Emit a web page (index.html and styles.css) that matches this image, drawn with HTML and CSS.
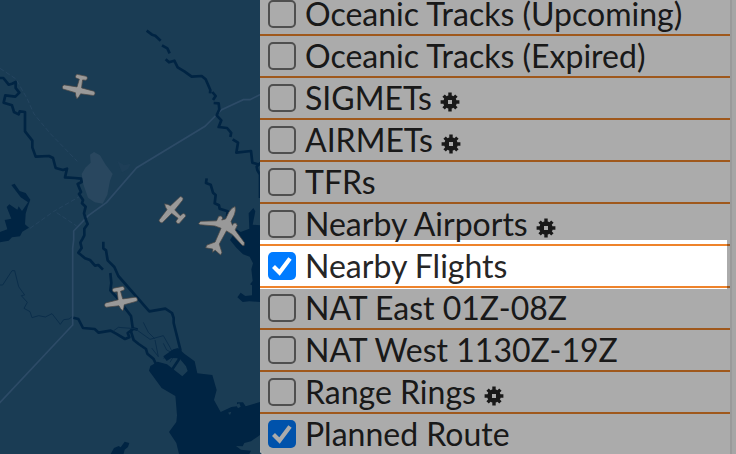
FILE: index.html
```
<!DOCTYPE html>
<html lang="en">

<head>
  <meta charset="UTF-8">
  <meta name="viewport" content="width=device-width, initial-scale=1.0">
  <title>Map Layers</title>
  <link rel="stylesheet" href="styles.css">
</head>

<body>
  <!-- shared icons -->
  <svg class="defs" aria-hidden="true">
    <symbol id="gear" viewBox="0 0 20 20">
      <g stroke="#262626" stroke-width="3.4">
        <path d="M10 .6v18.8M.6 10h18.8" />
        <path d="M3.6 3.6l12.8 12.8M16.4 3.6L3.6 16.4" />
      </g>
      <circle cx="10" cy="10" r="6.8" fill="#262626" />
      <rect x="8" y="8" width="4" height="4" fill="#fff" />
    </symbol>
  </svg>

  <main class="layout">
    <div class="map">
      <svg viewBox="0 0 780 1362" preserveAspectRatio="xMinYMin slice" role="img" aria-label="Flight map">
        <defs>
          <path id="prop" d="M-14 -46Q-18 -45 -18 -39Q-18 -34 -13 -34L-5 -33L-7 -9L-45 -7Q-50 -6 -50 0Q-50 6 -45 6L-8 9L-5 18L0 26L5 18L8 9L45 6Q50 6 50 0Q50 -6 45 -7L7 -9L5 -33L13 -34Q18 -34 18 -39Q18 -45 14 -46Z" />
          <path id="jet" d="M0 -64Q8 -56 9 -40L9 -18L18 -10L18 -16Q24 -24 31 -16L31 -1L73 21L76 30L70 31L29 15L9 13L7 58L25 77L25 86L4 80L0 89L-4 80L-25 86L-25 77L-7 58L-9 13L-29 15L-70 31L-76 30L-73 21L-31 -1L-31 -16Q-24 -24 -18 -16L-18 -10L-9 -18L-9 -40Q-8 -56 0 -64Z" />
        </defs>

        <!-- urban area and borders -->
        <path class="urban" d="M270 464l12-8 18 10 16 27 22 29-8 20-8 42-14 27-24-4-20-14-14-40-5-31 11-19 16-15z" />
        <path class="urban" d="M352 482l20 14 20-5-8 16-18 10z" opacity=".3" />
        <g class="border">
          <path d="M782 283l-32 16h-20l-65 30-50 50-205 124-90 104-55 40-44 46v27l-3 25v230L-4 1212" />
          <path class="dashed" d="M0 205l48 32 34 60 20 45 50 60 80 82M90 685l70-50 90-52M170 638l60 40" />
        </g>

        <!-- rivers -->
        <g class="river">
          <path d="M440 92l16 12 10 3 16 15M486 136l16 9 7 15M497 178l10 9 16-5 10 20 20 12 22 16 30-2 12 10 14 32-1 10M637 276l10 12-8 12M641 309l15 1 2 18-8 18 14 15-8 20 25 3 12 14M694 396l-3 15M698 418l16 10-5 30 44-5 4 35 22 6M782 488l-12 12 2 10 8 14v70" />
          <path d="M620 535l-2 14 14 5 7 24 8 7-3 25 13 6 2 10 24 8-2 16 16 8" />
          <path d="M0 234h10l16 20 10-3 11-5v18l11 14-12 12-30-4-5 22 25 8 6 20 14 7 3-9 16 2v58l22 28v20l10 28 40-2 12 6 8 30 22 6 12-4-6 26 30 2 18 2 2 10-12 6 10 24-6 6 12 18-3 10 11 10-5 20 6 20 5 12-10 14v20l-5 10-7 12 4 16-10 14 20 17 15 5 15 17 10-2 14 14" />
          <path d="M310 725v20l8 6 5 30 20 20 12 27 93 106 48-8 20 13 5 15v15l20 80-5 30-20 30-15 20-16-8-15-25-10-20-18-15-4-14-22-15-15-12-8-25 5-12-5-35-42-55-20-22 3-22-3-30" />
          <path d="M220 953l15 4 14 27 35 3 12 11 36-6 20 11 23 14 13-5-5-13 18-13 12 3" />
        </g>
        <g class="creek">
          <path d="M0 855h8l28-43h8l12 48 18 25-10 2 18 20-10 18 18 10 6 18 20-6 20 4 20-10 25 32 10-14 16-2 8-6M340 993l15-11 50 4 45 32 40-11 20 35 12 25-12 20M430 967l15 30 20 20M465 1020l10 50-20-26M490 1030l10 20 20 10-30 15" />
        </g>

        <!-- lakes and bays -->
        <g class="water">
          <path d="M34 555l10-4 15 22 18 6 14 20-8 22-6 20-2 32 12 10-20 12-7 14-24 3-10 10-26 5V696l22-8-8-28 20-4-14-35 8-8 24 16 4-10 10 14 18-26-22-15z" />
          <path d="M690 720l20-32 12 8 26-10-2-46 14-16 6 10-8 40 24 2v230l-34-2-20 2-16-14 10-14 14 10 20-2v-30l-6-3 8-10-4-35 5-18-10-20-20-7-20-20z" />
          <path d="M520 1048l14-4 20 18 30 22 8 36 45 5 13 45-8 30 20 36 32-15 17-2v-12h18l8 12 65-20v163H537l-8-33-22-33 22-30 2-20-4-48-1-10-41-24-38-52 4-14 22-13 28 8 46 36 16-16-5-14-20-24-24-1-14 9-10-14z" />
          <path d="M332 1362l10-18 14-6 6 4 12-17 14 4-4 12-10 8-4 16z" />
        </g>
        <path class="island" d="M684 1238l10-3-4 10zM708 1214l10-4 4 10-8 5zM708 1338l20 1 5-10 20-5 27-19v57h-32l5-10-30-3z" />

        <!-- aircraft -->
        <g class="plane">
          <use href="#prop" transform="translate(236 271) rotate(12)" />
          <use href="#prop" transform="translate(513 629) rotate(132)" />
          <use href="#prop" transform="translate(363 907) rotate(-11)" />
          <use href="#jet" transform="translate(677 677) rotate(26)" />
        </g>
      </svg>
    </div>

    <form class="panel">
      <ul class="layers">
        <li class="layer"><label><input type="checkbox"><span>Oceanic Tracks (Upcoming)</span></label></li>
        <li class="layer"><label><input type="checkbox"><span>Oceanic Tracks (Expired)</span></label></li>
        <li class="layer">
          <label><input type="checkbox"><span>SIGMETs</span></label>
          <button type="button" class="settings" aria-label="SIGMETs settings"><svg><use href="#gear" /></svg></button>
        </li>
        <li class="layer">
          <label><input type="checkbox"><span>AIRMETs</span></label>
          <button type="button" class="settings" aria-label="AIRMETs settings"><svg><use href="#gear" /></svg></button>
        </li>
        <li class="layer"><label><input type="checkbox"><span>TFRs</span></label></li>
        <li class="layer">
          <label><input type="checkbox"><span>Nearby Airports</span></label>
          <button type="button" class="settings" aria-label="Nearby Airports settings"><svg><use href="#gear" /></svg></button>
        </li>
        <li class="layer spotlight"><label><input type="checkbox" checked><span>Nearby Flights</span></label></li>
        <li class="layer"><label><input type="checkbox"><span>NAT East 01Z-08Z</span></label></li>
        <li class="layer"><label><input type="checkbox"><span>NAT West 1130Z-19Z</span></label></li>
        <li class="layer">
          <label><input type="checkbox"><span>Range Rings</span></label>
          <button type="button" class="settings" aria-label="Range Rings settings"><svg><use href="#gear" /></svg></button>
        </li>
        <li class="layer"><label><input type="checkbox" checked><span>Planned Route</span></label></li>
      </ul>
    </form>
  </main>
</body>

</html>
```
FILE: styles.css
```
* {
  box-sizing: border-box;
}

body {
  margin: 0;
  font-family: Lato, sans-serif;
  background: #1a3c54;
  color: #262626;
}

.defs {
  display: none;
}

.layout {
  display: grid;
  grid-template-columns: 260px 1fr;
  height: 100vh;
  overflow: hidden;
}

/* map */
.map {
  overflow: hidden;
}

.map svg {
  display: block;
  width: 100%;
  height: 100%;
}

.urban {
  fill: #29475f;
}

.border {
  fill: none;
  stroke: #2d4b67;
  stroke-width: 5;
}

.dashed {
  stroke: #254560;
  stroke-width: 3;
  stroke-dasharray: 14 7;
}

.river {
  fill: none;
  stroke: #002443;
  stroke-width: 8;
  stroke-linejoin: round;
}

.creek {
  fill: none;
  stroke: #0b2e4b;
  stroke-width: 3;
}

.water {
  fill: #002443;
}

.island {
  fill: #1a3c54;
}

.plane {
  fill: #999;
  stroke: #4b4744;
  stroke-width: 2;
  stroke-linejoin: round;
}

/* layer list */
.panel {
  overflow: hidden;
  padding-right: 4px;
  background: #f8f8f8;
  border-bottom-left-radius: 4px;
}

.layers {
  list-style: none;
  margin: -6px 0 0;
  padding: 0;
  background: #fff;
  border-right: 2px solid #e6e6e6;
}

.layer {
  display: flex;
  align-items: center;
  height: 42px;
  padding-left: 8px;
  border-bottom: 2px solid #ee832b;
}

.layer label {
  display: flex;
  align-items: center;
  gap: 9px;
  font-size: 32px;
  line-height: 28px;
  white-space: nowrap;
}

.layer input {
  appearance: none;
  width: 28px;
  height: 28px;
  margin: 0;
  border: 2px solid #767676;
  border-radius: 5px;
  background: #fff;
}

.layer input:checked {
  border: none;
  background: #007bff url("data:image/svg+xml,%3Csvg xmlns='http://www.w3.org/2000/svg' viewBox='0 0 28 28'%3E%3Cpath d='M5.5 14.5l6 6L22 6.5' fill='none' stroke='white' stroke-width='4.2'/%3E%3C/svg%3E");
}

.settings {
  width: 20px;
  height: 20px;
  margin: 8px 0 0 8px;
  padding: 0;
  border: none;
  background: none;
}

.settings svg {
  display: block;
  width: 20px;
  height: 20px;
}

/* everything in the panel but this row is dimmed */
.spotlight {
  position: relative;
}

.spotlight::after {
  content: "";
  position: absolute;
  inset: -6px 3px -3px 0;
  box-shadow: 0 0 0 2000px rgba(0, 0, 0, 0.33);
  pointer-events: none;
}
```
